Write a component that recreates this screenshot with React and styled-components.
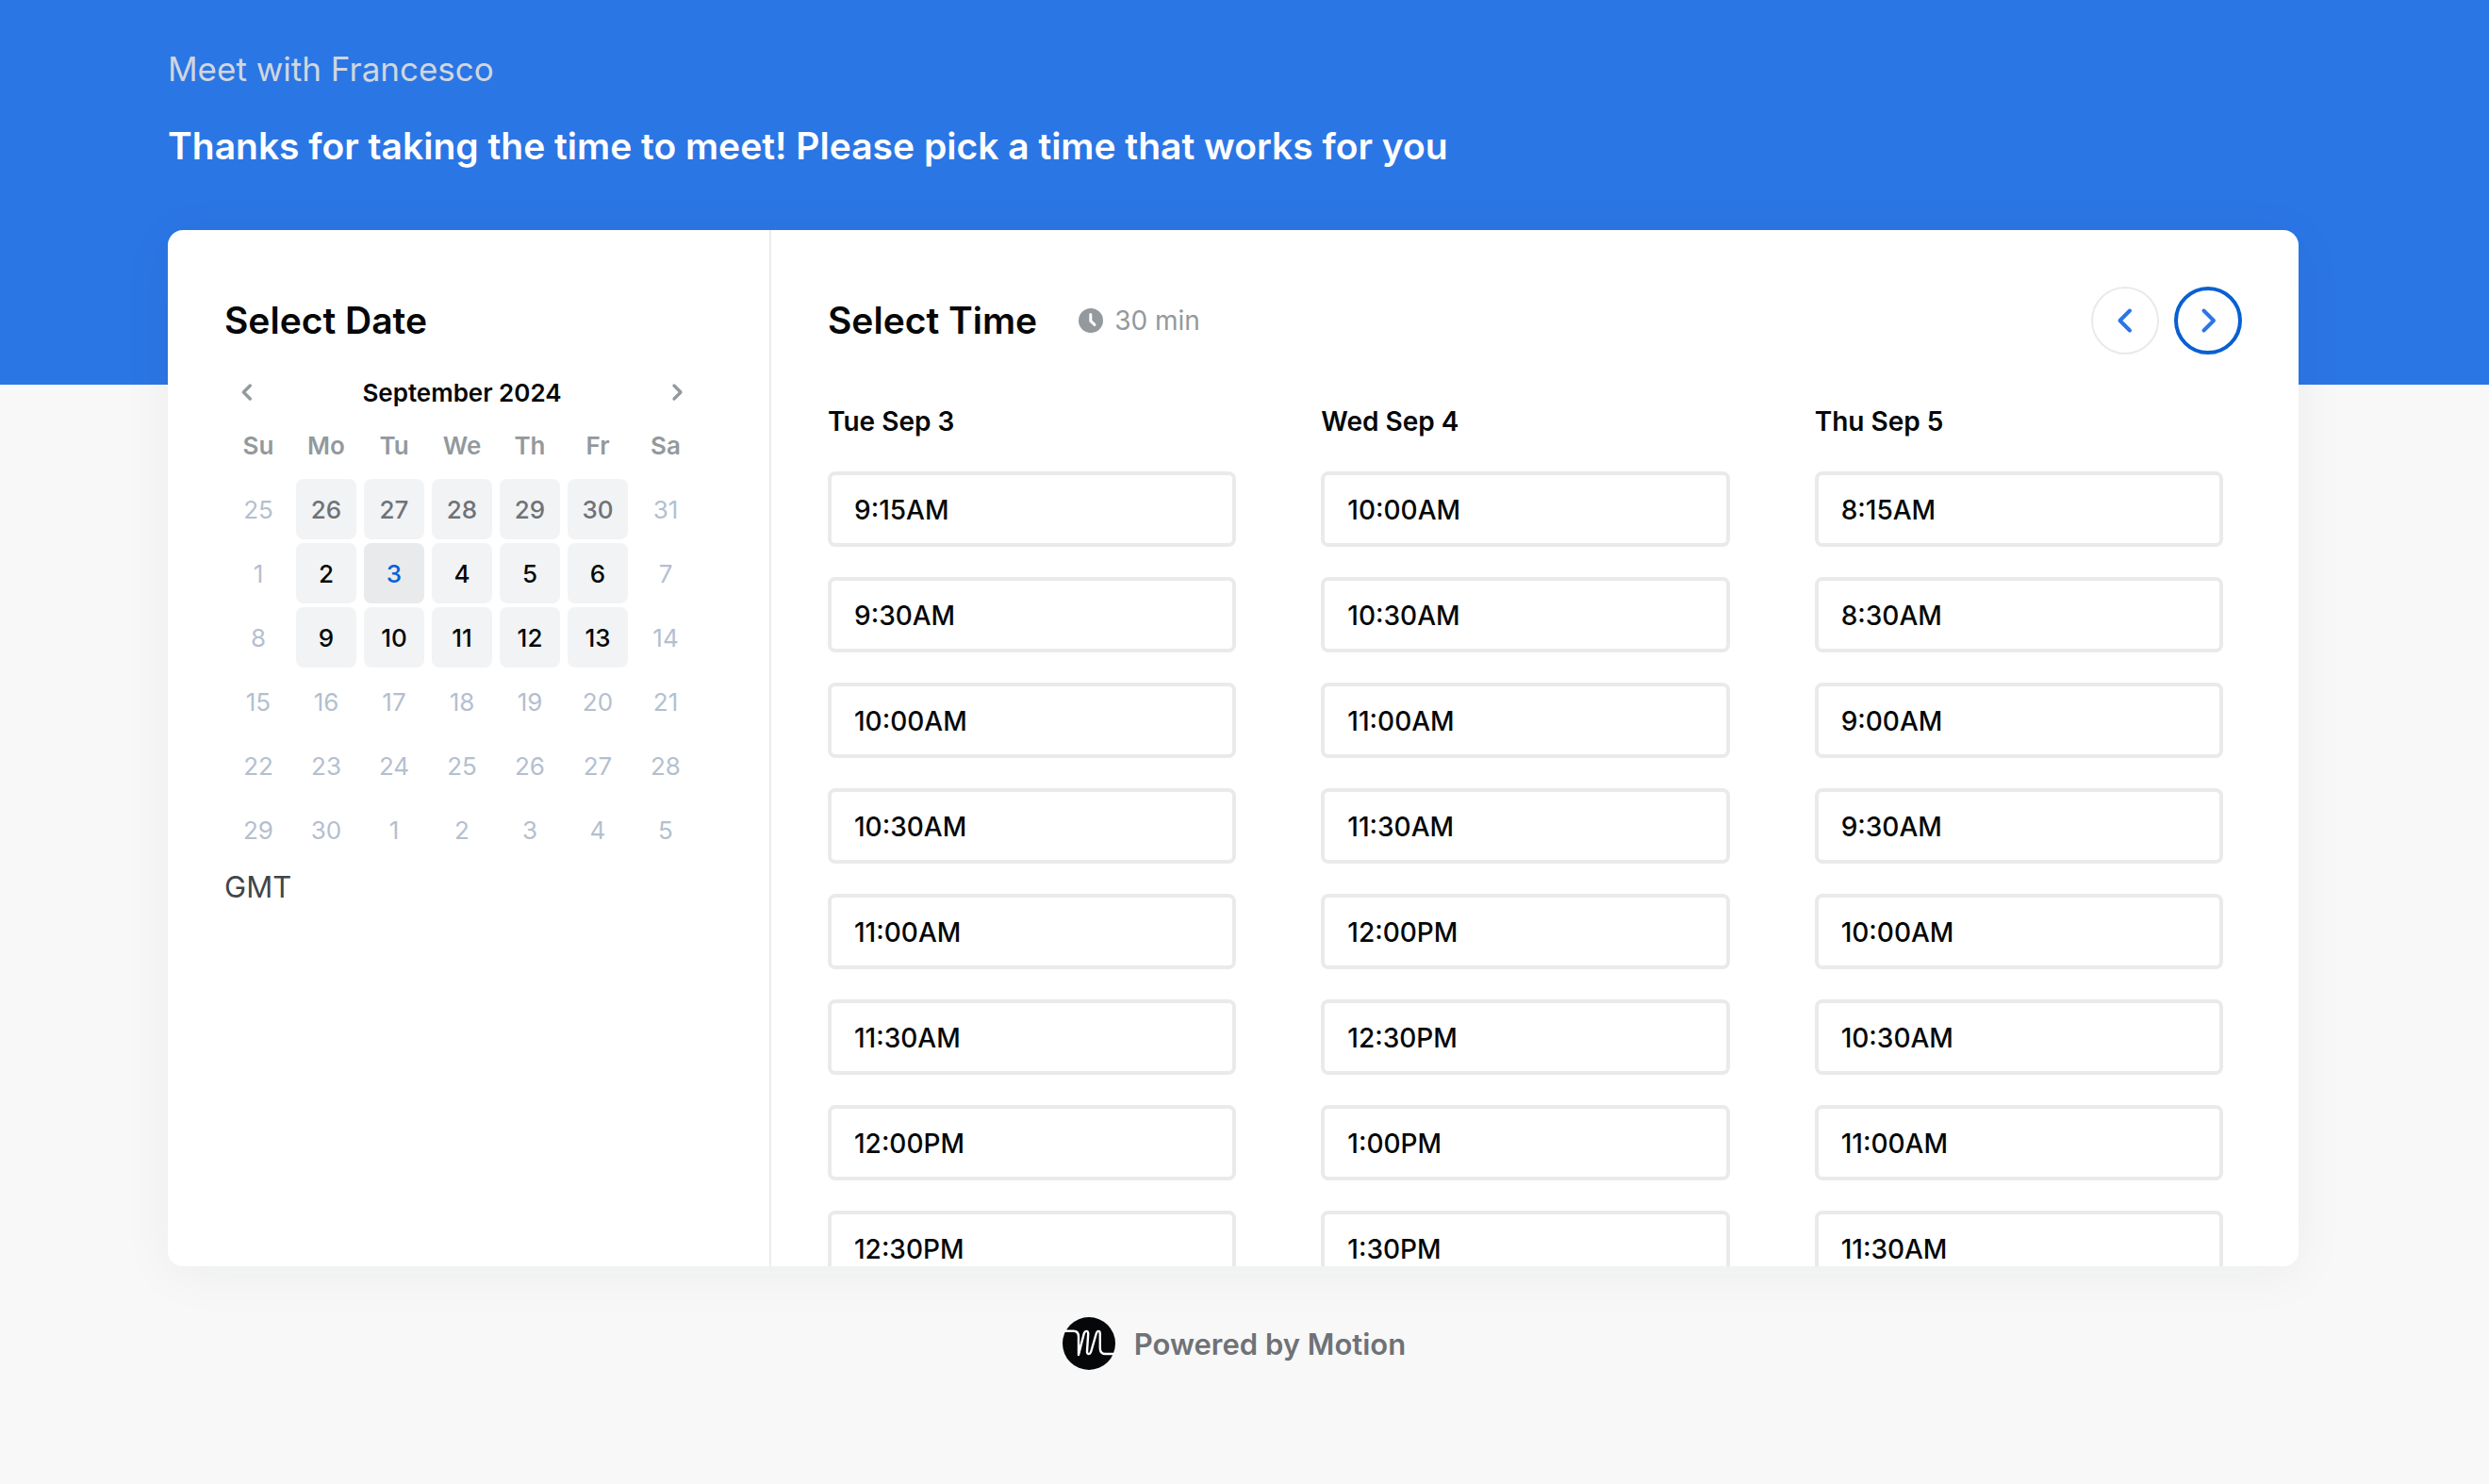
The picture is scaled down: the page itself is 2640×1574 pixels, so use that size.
import React, { useState } from "react";
import styled, { createGlobalStyle } from "styled-components";

const weekDays = ["Su", "Mo", "Tu", "We", "Th", "Fr", "Sa"];

// type: off = nothing to book, past = bookable last month, open = bookable
const weeks = [
  { days: [25, 26, 27, 28, 29, 30, 31], type: "past" },
  { days: [1, 2, 3, 4, 5, 6, 7], type: "open" },
  { days: [8, 9, 10, 11, 12, 13, 14], type: "open" },
  { days: [15, 16, 17, 18, 19, 20, 21], type: "off" },
  { days: [22, 23, 24, 25, 26, 27, 28], type: "off" },
  { days: [29, 30, 1, 2, 3, 4, 5], type: "off" },
];

const columns = [
  {
    name: "Tue Sep 3",
    slots: ["9:15AM", "9:30AM", "10:00AM", "10:30AM", "11:00AM", "11:30AM", "12:00PM", "12:30PM"],
  },
  {
    name: "Wed Sep 4",
    slots: ["10:00AM", "10:30AM", "11:00AM", "11:30AM", "12:00PM", "12:30PM", "1:00PM", "1:30PM"],
  },
  {
    name: "Thu Sep 5",
    slots: ["8:15AM", "8:30AM", "9:00AM", "9:30AM", "10:00AM", "10:30AM", "11:00AM", "11:30AM"],
  },
];

const Chevron = ({ size, stroke, right }) => (
  <svg
    width={size}
    height={size}
    viewBox="0 0 24 24"
    fill="none"
    overflow="visible"
    aria-hidden="true"
  >
    <path
      d={right ? "M7.5 1.5 L18 12 L7.5 22.5" : "M17 1.5 L6.5 12 L17 22.5"}
      stroke="currentColor"
      strokeWidth={stroke}
      strokeLinecap="round"
      strokeLinejoin="round"
    />
  </svg>
);

const ClockIcon = () => (
  <svg width="26" height="26" viewBox="0 0 26 26" fill="none" aria-hidden="true">
    <circle cx="13" cy="13" r="13" fill="#93999d" />
    <path
      d="M12.8 6.5 V13.4 L17 17.4"
      stroke="#fff"
      strokeWidth="3"
      strokeLinecap="round"
      strokeLinejoin="round"
    />
  </svg>
);

const MotionLogo = () => (
  <svg width="56" height="56" viewBox="0 0 56 56" fill="none" aria-hidden="true">
    <circle cx="28" cy="28" r="28" fill="#050708" />
    <path
      d="M3 14.8 H11.5 C15.5 14.8 17 17 17 21 V40 L22.6 18 C23.8 13.8 27.4 13.8 27.2 18 L26 36 C25.8 40.2 29.2 40.2 30.4 36 L35.6 18 C36.8 13.8 39.8 13.8 39.8 18 V33 C39.8 37 41 39 45 39 H55"
      stroke="#fff"
      strokeWidth="2.4"
      strokeLinejoin="round"
    />
  </svg>
);

const DatePicker = () => {
  const [selected, setSelected] = useState("1-2");

  const getType = (week, index) => {
    if (index === 0 || index === 6) {
      return "off";
    }
    return week.type;
  };

  return (
    <DatePanel>
      <PanelTitle>Select Date</PanelTitle>
      <MonthNav>
        <MonthButton type="button" aria-label="Previous month">
          <Chevron size={16} stroke={5} />
        </MonthButton>
        <MonthName>September 2024</MonthName>
        <MonthButton type="button" aria-label="Next month">
          <Chevron size={16} stroke={5} right />
        </MonthButton>
      </MonthNav>
      <Calendar>
        <thead>
          <tr>
            {weekDays.map((day) => (
              <WeekDay key={day} scope="col">
                {day}
              </WeekDay>
            ))}
          </tr>
        </thead>
        <tbody>
          {weeks.map((week, row) => (
            <tr key={row}>
              {week.days.map((day, index) => {
                const type = getType(week, index);
                const id = `${row}-${index}`;
                return (
                  <DayCell key={id}>
                    <DayButton
                      type="button"
                      $type={type}
                      $selected={selected === id}
                      disabled={type === "off"}
                      onClick={() => setSelected(id)}
                    >
                      {day}
                    </DayButton>
                  </DayCell>
                );
              })}
            </tr>
          ))}
        </tbody>
      </Calendar>
      <TimeZone>GMT</TimeZone>
    </DatePanel>
  );
};

const TimePicker = () => {
  return (
    <TimePanel>
      <TimeHeader>
        <PanelTitle>Select Time</PanelTitle>
        <Duration>
          <ClockIcon />
          30 min
        </Duration>
        <Arrows>
          <ArrowButton type="button" aria-label="Previous days">
            <Chevron size={24} stroke={4} />
          </ArrowButton>
          <ArrowButton type="button" aria-label="Next days" $active>
            <Chevron size={24} stroke={4} right />
          </ArrowButton>
        </Arrows>
      </TimeHeader>
      <Columns>
        {columns.map((column) => (
          <div key={column.name}>
            <ColumnTitle>{column.name}</ColumnTitle>
            <SlotList>
              {column.slots.map((slot) => (
                <li key={slot}>
                  <SlotButton type="button">{slot}</SlotButton>
                </li>
              ))}
            </SlotList>
          </div>
        ))}
      </Columns>
    </TimePanel>
  );
};

const App = () => {
  return (
    <>
      <GlobalStyle />
      <Page>
        <Header>
          <Meeting>Meet with Francesco</Meeting>
          <Title>Thanks for taking the time to meet! Please pick a time that works for you</Title>
        </Header>
        <Card>
          <DatePicker />
          <TimePicker />
        </Card>
        <Footer>
          <PoweredBy href="#">
            <MotionLogo />
            Powered by Motion
          </PoweredBy>
        </Footer>
      </Page>
    </>
  );
};

export default App;

const GlobalStyle = createGlobalStyle`
  * {
    box-sizing: border-box;
  }
  body {
    margin: 0;
    background: #f8f8f8;
    color: #050708;
    font-family: Inter, "Liberation Sans", sans-serif;
  }
  h1, h2, h3, p, ul {
    margin: 0;
    padding: 0;
  }
  button {
    font-family: inherit;
    cursor: pointer;
  }
`;

const Page = styled.div`
  display: flex;
  flex-direction: column;
  height: 100vh;
`;

const Header = styled.header`
  flex: none;
  height: 408px;
  padding: 50px 202px 0 178px;
  background: #2b76e5;
`;

const Meeting = styled.p`
  color: #d0d6de;
  font-size: 35px;
  line-height: 46px;
`;

const Title = styled.h1`
  margin-top: 34px;
  color: #fff;
  font-size: 39px;
  font-weight: 600;
  line-height: 50px;
`;

const Card = styled.main`
  display: flex;
  flex: 1;
  min-height: 0;
  margin: -164px 202px 0 178px;
  overflow: hidden;
  background: #fff;
  border-radius: 16px;
  box-shadow: 0 8px 56px rgba(10, 30, 60, 0.05);
`;

const DatePanel = styled.section`
  flex: none;
  width: 640px;
  padding: 60px;
  border-right: 2px solid #ebedee;
`;

const PanelTitle = styled.h2`
  font-size: 39px;
  font-weight: 600;
  line-height: 72px;
`;

const MonthNav = styled.div`
  display: flex;
  align-items: center;
  justify-content: space-between;
  width: 504px;
  height: 80px;
`;

const MonthButton = styled.button`
  display: flex;
  align-items: center;
  justify-content: center;
  width: 48px;
  height: 48px;
  padding: 0;
  border: none;
  background: none;
  color: #93999d;
`;

const MonthName = styled.h3`
  font-size: 26px;
  font-weight: 600;
`;

const Calendar = styled.table`
  width: 504px;
  border-collapse: collapse;
  table-layout: fixed;
`;

const WeekDay = styled.th`
  padding: 0 0 16px;
  color: #93999d;
  font-size: 26px;
  font-weight: 600;
  line-height: 34px;
`;

const DayCell = styled.td`
  padding: 2px 4px;
`;

const dayColors = {
  off: "#b4bfcf",
  past: "#6f7277",
  open: "#050708",
};

const DayButton = styled.button`
  display: block;
  width: 64px;
  height: 64px;
  padding: 0;
  border: none;
  border-radius: 8px;
  background: ${({ $type, $selected }) =>
    $selected ? "#e8eaeb" : $type === "off" ? "none" : "#f1f3f4"};
  color: ${({ $type, $selected }) => ($selected ? "#0860d8" : dayColors[$type])};
  font-size: 26px;
  font-weight: ${({ $type }) => ($type === "off" ? 400 : 500)};
`;

const TimeZone = styled.p`
  margin-top: 8px;
  color: #414548;
  font-size: 31px;
  line-height: 38px;
`;

const TimePanel = styled.section`
  display: flex;
  flex: 1;
  flex-direction: column;
  min-width: 0;
  padding: 60px 60px 0;
`;

const TimeHeader = styled.div`
  display: flex;
  flex: none;
  align-items: center;
  height: 72px;
`;

const Duration = styled.span`
  display: flex;
  align-items: center;
  gap: 12px;
  margin-left: 44px;
  color: #93999d;
  font-size: 28px;
`;

const Arrows = styled.div`
  display: flex;
  gap: 16px;
  margin-left: auto;
`;

const ArrowButton = styled.button`
  display: flex;
  align-items: center;
  justify-content: center;
  width: 72px;
  height: 72px;
  padding: 0;
  border: ${({ $active }) => ($active ? "4px solid #0860d2" : "2px solid #e8eaeb")};
  border-radius: 50%;
  background: #fff;
  color: #2b76e5;
`;

const Columns = styled.div`
  display: grid;
  grid-template-columns: repeat(3, 1fr);
  gap: 90px;
  min-height: 0;
  padding: 52px 20px 0 0;
  overflow-y: auto;
  scrollbar-width: none;
`;

const ColumnTitle = styled.h3`
  margin-bottom: 34px;
  font-size: 28px;
  font-weight: 600;
  line-height: 38px;
`;

const SlotList = styled.ul`
  display: grid;
  gap: 32px;
  list-style: none;
`;

const SlotButton = styled.button`
  display: block;
  width: 100%;
  height: 80px;
  padding: 2px 24px 0;
  border: 4px solid #e8eaeb;
  border-radius: 8px;
  background: #fff;
  color: #050708;
  font-size: 28px;
  font-weight: 500;
  text-align: left;
`;

const Footer = styled.footer`
  display: flex;
  flex: none;
  justify-content: center;
  height: 231px;
  padding: 54px 22px 0 0;
`;

const PoweredBy = styled.a`
  display: flex;
  align-items: center;
  gap: 20px;
  height: 56px;
  color: #6f7277;
  font-size: 31px;
  font-weight: 600;
  text-decoration: none;
`;
